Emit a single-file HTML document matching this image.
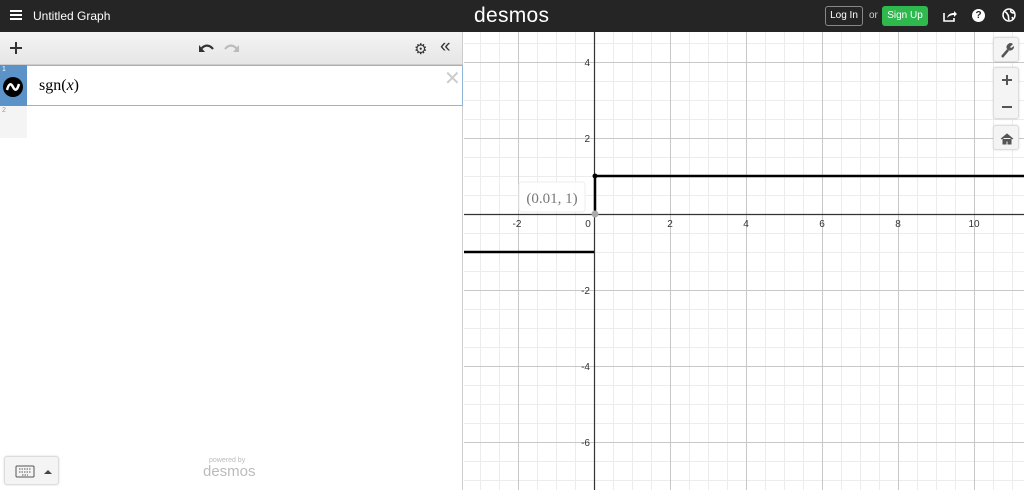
<!DOCTYPE html>
<html><head><style>
*{margin:0;padding:0;box-sizing:border-box}
body{width:1024px;height:490px;overflow:hidden;font-family:"Liberation Sans",Arial,sans-serif;background:#fff;position:relative}
.top{position:absolute;left:0;top:0;width:1024px;height:32px;background:#252525;color:#fff}
.panel{position:absolute;left:0;top:32px;width:463px;height:458px;background:#fff;border-right:1px solid #ccc}
.tb{height:33px;background:linear-gradient(#f4f4f4,#e6e6e6);border-bottom:1px solid #ccc;position:relative}
.btn{position:absolute;background:#f4f4f4;border:1px solid #ddd;border-radius:3px;box-shadow:0 0 2px rgba(0,0,0,.15)}
</style></head><body>
<div class="top">
 <div style="position:absolute;left:10px;top:10px;width:12px;height:2px;background:#fff;box-shadow:0 4px 0 #fff,0 8px 0 #fff"></div>
 <div style="position:absolute;left:33px;top:9px;font-size:12px">Untitled Graph</div>
 <div style="position:absolute;left:474px;top:4px;font-size:21px;letter-spacing:0.3px">desmos</div>
 <div style="position:absolute;left:825px;top:6px;width:38px;height:20px;border:1px solid #888;border-radius:3px;font-size:10px;line-height:18px;text-align:center">Log In</div>
 <div style="position:absolute;left:869px;top:10px;font-size:10px;color:#ccc">or</div>
 <div style="position:absolute;left:882px;top:6px;width:46px;height:20px;background:#2fb84d;border-radius:3px;font-size:10px;line-height:20px;text-align:center">Sign Up</div>
 <svg style="position:absolute;left:943px;top:9px" width="14" height="13" viewBox="0 0 14 13"><path d="M1 4v8h10V9" fill="none" stroke="#fff" stroke-width="1.6"/><path d="M4 9c1-4 4-5 7-5V2l3 3-3 3V6c-3 0-5 1-7 3z" fill="#fff"/></svg>
 <div style="position:absolute;left:972px;top:9px;width:13px;height:13px;border-radius:50%;background:#fff;color:#252525;font-size:10px;font-weight:bold;text-align:center;line-height:13px">?</div>
 <svg style="position:absolute;left:1002px;top:8px" width="14" height="14" viewBox="0 0 14 14"><circle cx="7" cy="7" r="6" fill="none" stroke="#fff" stroke-width="1.5"/><path d="M3 4c2 0 2 2 3 3s0 3 1 5M9 2c-1 2 1 3 3 3M10 9l1 2" fill="none" stroke="#fff" stroke-width="1.6"/></svg>
</div>
<svg style="position:absolute;left:0;top:0" width="1024" height="490">
 <defs><clipPath id="c"><rect x="464" y="32" width="560" height="458"/></clipPath></defs>
 <g clip-path="url(#c)">
 <g stroke="#ececec" stroke-width="1" id="minor"></g>
 <g stroke="#c8c8c8" stroke-width="1" id="major"></g>
 <line x1="594.5" y1="32" x2="594.5" y2="490" stroke="#333" stroke-width="1.2"/>
 <line x1="464" y1="214.5" x2="1024" y2="214.5" stroke="#333" stroke-width="1.2"/>
 <g font-size="10" fill="#333" font-family="Liberation Sans,Arial" text-anchor="middle">
  <text x="517" y="227">-2</text><text x="588" y="227">0</text><text x="670" y="227">2</text><text x="746" y="227">4</text><text x="822" y="227">6</text><text x="898" y="227">8</text><text x="974" y="227">10</text>
  <text x="590" y="66" text-anchor="end">4</text><text x="590" y="142" text-anchor="end">2</text><text x="590" y="294" text-anchor="end">-2</text><text x="590" y="370" text-anchor="end">-4</text><text x="590" y="446" text-anchor="end">-6</text>
 </g>
 <g stroke="#000" stroke-width="2.5" fill="none">
  <path d="M464 252H594"/><path d="M595 214V176H1024"/>
 </g>
 <circle cx="595" cy="176" r="2.5" fill="#000"/>
 <circle cx="595" cy="214" r="3.5" fill="#aaa"/>
 <rect x="519" y="182" width="66" height="30" rx="3" fill="#fff" fill-opacity=".9" stroke="#eee"/>
 <text x="552" y="203" font-size="15" fill="#777" text-anchor="middle" font-family="Liberation Serif,serif">(0.01, 1)</text>
 </g>
</svg>
<script>
var mi=document.getElementById('minor'),ma=document.getElementById('major'),ns='http://www.w3.org/2000/svg';
function ln(p,x1,y1,x2,y2){var l=document.createElementNS(ns,'line');l.setAttribute('x1',x1);l.setAttribute('y1',y1);l.setAttribute('x2',x2);l.setAttribute('y2',y2);p.appendChild(l);}
for(var k=-8;k<30;k++){var x=594+k*19+.5;ln(k%4==0?ma:mi,x,32,x,490);}
for(var k=-10;k<15;k++){var y=214+k*19+.5;ln(k%4==0?ma:mi,464,y,1024,y);}
</script>
<div class="btn" style="left:993px;top:37px;width:26px;height:25px"><svg width="26" height="25"><path d="M8 19l6-7" stroke="#555" stroke-width="2.5" fill="none"/><path d="M13 11a4 4 0 0 1 6-5l-3 3 1 1 3-2a4 4 0 0 1-6 4z" fill="#555"/></svg></div>
<div class="btn" style="left:993px;top:67px;width:26px;height:52px"><div style="position:absolute;left:8px;top:11px;width:10px;height:2px;background:#555"></div><div style="position:absolute;left:12px;top:7px;width:2px;height:10px;background:#555"></div><div style="position:absolute;left:8px;top:38px;width:10px;height:2px;background:#555"></div></div>
<div class="btn" style="left:993px;top:125px;width:26px;height:25px"><svg width="26" height="25"><path d="M7 13l6-5 6 5M9 12v6h3v-3h2v3h3v-6" fill="#555" stroke="#555"/></svg></div>
<div class="panel">
 <div class="tb">
  <div style="position:absolute;left:10px;top:15px;width:12px;height:2px;background:#333"></div><div style="position:absolute;left:15px;top:10px;width:2px;height:12px;background:#333"></div>
  <svg style="position:absolute;left:197px;top:9px" width="44" height="14"><path d="M4 8c4-5 9-4 12 0" fill="none" stroke="#333" stroke-width="2.2"/><path d="M2 4v7h6z" fill="#333"/><path d="M40 8c-4-5-9-4-12 0" fill="none" stroke="#bbb" stroke-width="2.2"/><path d="M42 4v7h-6z" fill="#bbb"/></svg>
  <div style="position:absolute;left:414px;top:8px;font-size:15px;color:#333">⚙</div>
  <div style="position:absolute;left:440px;top:4px;font-size:19px;color:#333">«</div>
 </div>
 <div style="position:absolute;left:0;top:33px;width:463px;height:41px;border:1px solid #8fb6d9;background:#fff"></div>
 <div style="position:absolute;left:0;top:33px;width:27px;height:41px;background:#5b93c8"><span style="position:absolute;left:2px;top:1px;font-size:7px;color:#fff">1</span><div style="position:absolute;left:3px;top:12px;width:20px;height:20px;border-radius:50%;background:#000"><svg width="20" height="20"><path d="M4 13c2-7 4-7 6-3s4 4 6-3" stroke="#fff" stroke-width="2.5" fill="none"/></svg></div></div>
 <div style="position:absolute;left:39px;top:45px;font-family:'Liberation Serif',serif;font-size:16px;color:#000">sgn(<i>x</i>)</div>
 <div style="position:absolute;left:444px;top:34px;font-size:20px;color:#ccc">✕</div>
 <div style="position:absolute;left:0;top:74px;width:27px;height:32px;background:#f4f4f4"><span style="position:absolute;left:2px;top:1px;font-size:7px;color:#999">2</span></div>
 <div class="btn" style="left:4px;top:424px;width:55px;height:29px"><svg style="position:absolute;left:10px;top:8px" width="40" height="13"><rect x="1" y="1" width="18" height="11" rx="1" fill="none" stroke="#555"/><path d="M4 4h12M4 7h12M7 10h6" stroke="#555" stroke-dasharray="1.5 1"/><path d="M29 9l4-4 4 4z" fill="#444"/></svg></div>
 <div style="position:absolute;left:209px;top:425px;font-size:7px;color:#bbb">powered by</div>
 <div style="position:absolute;left:203px;top:431px;font-size:15px;color:#bbb">desmos</div>
</div>
</body></html>
